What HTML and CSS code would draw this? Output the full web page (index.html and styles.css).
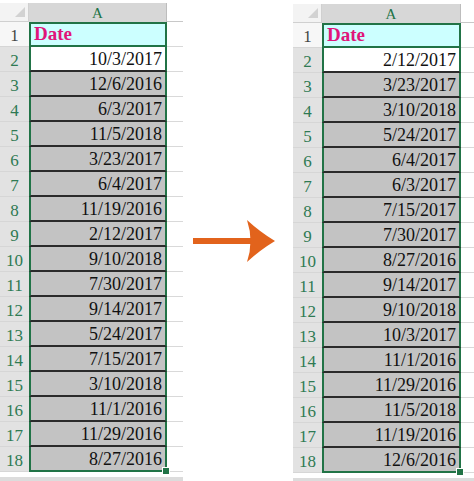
FILE: index.html
```html
<!DOCTYPE html>
<html>
<head>
<meta charset="utf-8">
<link rel="stylesheet" href="styles.css">
</head>
<body>
<div class="page">
  <div class="sheet sheet-left">
    <div class="grid grid-left">
      <div class="corner"><span class="tri"></span></div>
      <div class="colhead">A</div>
      <div class="xhead"></div>

      <div class="rh">1</div><div class="ca a1">Date</div><div class="cx"></div>
      <div class="rh sel">2</div><div class="ca">10/3/2017</div><div class="cx"></div>
      <div class="rh sel">3</div><div class="ca g">12/6/2016</div><div class="cx"></div>
      <div class="rh sel">4</div><div class="ca g">6/3/2017</div><div class="cx"></div>
      <div class="rh sel">5</div><div class="ca g">11/5/2018</div><div class="cx"></div>
      <div class="rh sel">6</div><div class="ca g">3/23/2017</div><div class="cx"></div>
      <div class="rh sel">7</div><div class="ca g">6/4/2017</div><div class="cx"></div>
      <div class="rh sel">8</div><div class="ca g">11/19/2016</div><div class="cx"></div>
      <div class="rh sel">9</div><div class="ca g">2/12/2017</div><div class="cx"></div>
      <div class="rh sel">10</div><div class="ca g">9/10/2018</div><div class="cx"></div>
      <div class="rh sel">11</div><div class="ca g">7/30/2017</div><div class="cx"></div>
      <div class="rh sel">12</div><div class="ca g">9/14/2017</div><div class="cx"></div>
      <div class="rh sel">13</div><div class="ca g">5/24/2017</div><div class="cx"></div>
      <div class="rh sel">14</div><div class="ca g">7/15/2017</div><div class="cx"></div>
      <div class="rh sel">15</div><div class="ca g">3/10/2018</div><div class="cx"></div>
      <div class="rh sel">16</div><div class="ca g">11/1/2016</div><div class="cx"></div>
      <div class="rh sel">17</div><div class="ca g">11/29/2016</div><div class="cx"></div>
      <div class="rh sel">18</div><div class="ca g last">8/27/2016</div><div class="cx"></div>
    </div>
    <div class="strip"></div>
  </div>

  <div class="middle">
    <svg class="arrow" width="110" height="50" viewBox="0 0 110 50">
      <rect x="10" y="22" width="60" height="6" fill="#e2631c"/>
      <path d="M64 4 Q77 16 92 25 Q77 34 64 46 Q71 25 64 4 Z" fill="#e2631c"/>
    </svg>
  </div>

  <div class="sheet sheet-right">
    <div class="grid grid-right">
      <div class="corner"><span class="tri"></span></div>
      <div class="colhead">A</div>
      <div class="xhead"></div>

      <div class="rh">1</div><div class="ca a1">Date</div><div class="cx"></div>
      <div class="rh sel">2</div><div class="ca">2/12/2017</div><div class="cx"></div>
      <div class="rh sel">3</div><div class="ca g">3/23/2017</div><div class="cx"></div>
      <div class="rh sel">4</div><div class="ca g">3/10/2018</div><div class="cx"></div>
      <div class="rh sel">5</div><div class="ca g">5/24/2017</div><div class="cx"></div>
      <div class="rh sel">6</div><div class="ca g">6/4/2017</div><div class="cx"></div>
      <div class="rh sel">7</div><div class="ca g">6/3/2017</div><div class="cx"></div>
      <div class="rh sel">8</div><div class="ca g">7/15/2017</div><div class="cx"></div>
      <div class="rh sel">9</div><div class="ca g">7/30/2017</div><div class="cx"></div>
      <div class="rh sel">10</div><div class="ca g">8/27/2016</div><div class="cx"></div>
      <div class="rh sel">11</div><div class="ca g">9/14/2017</div><div class="cx"></div>
      <div class="rh sel">12</div><div class="ca g">9/10/2018</div><div class="cx"></div>
      <div class="rh sel">13</div><div class="ca g">10/3/2017</div><div class="cx"></div>
      <div class="rh sel">14</div><div class="ca g">11/1/2016</div><div class="cx"></div>
      <div class="rh sel">15</div><div class="ca g">11/29/2016</div><div class="cx"></div>
      <div class="rh sel">16</div><div class="ca g">11/5/2018</div><div class="cx"></div>
      <div class="rh sel">17</div><div class="ca g">11/19/2016</div><div class="cx"></div>
      <div class="rh sel">18</div><div class="ca g last">12/6/2016</div><div class="cx"></div>
    </div>
    <div class="strip"></div>
  </div>
</div>
</body>
</html>
```

FILE: styles.css
```css
html, body {
  margin: 0;
  padding: 0;
  background: #ffffff;
}

body {
  font-family: "Liberation Serif", "DejaVu Serif", "Times New Roman", serif;
  width: 474px;
  height: 481px;
  overflow: hidden;
}

.page {
  display: flex;
  align-items: stretch;
  height: 481px;
}

.sheet {
  display: flex;
  flex-direction: column;
  padding-top: 3px;
}

.sheet-right {
  padding-top: 4px;
}

.grid {
  display: grid;
  grid-template-rows: 19px repeat(18, 25px);
}

.grid-left {
  grid-template-columns: 29px 138px 16px;
}

.grid-right {
  grid-template-columns: 29px 139px 13px;
}

.middle {
  width: 110px;
  display: flex;
  align-items: center;
  justify-content: center;
}

.arrow {
  display: block;
}

.corner {
  background: #f3f3f3;
  border-bottom: 1px solid #d0d0d0;
  border-right: 1px solid #d0d0d0;
  box-sizing: border-box;
  display: flex;
  align-items: flex-end;
  justify-content: flex-end;
  padding: 0 3px 4px 0;
}

.tri {
  width: 0;
  height: 0;
  border-left: 10px solid transparent;
  border-bottom: 10px solid #d2d2d2;
}

.colhead {
  background: #d7d7d7;
  color: #217346;
  font-family: "Liberation Serif", serif;
  font-size: 15px;
  line-height: 1;
  display: flex;
  align-items: center;
  justify-content: center;
  box-sizing: border-box;
  border-right: 1px solid #bdbdbd;
  padding-top: 1px;
}

.xhead {
  border-bottom: 1px solid #c8c8c8;
  box-sizing: border-box;
}

.rh {
  box-sizing: border-box;
  background: #f7f7f7;
  border-bottom: 1px solid #d6d6d6;
  color: #444444;
  font-family: "Liberation Serif", serif;
  font-size: 17px;
  line-height: 1;
  display: flex;
  align-items: center;
  justify-content: center;
  padding-top: 3px;
}

.rh.sel {
  background: #e2e2e2;
  color: #2f7a53;
}

.ca {
  box-sizing: border-box;
  border-left: 2px solid #217346;
  border-right: 2px solid #217346;
  border-bottom: 2px solid #2b2b2b;
  font-family: "Liberation Serif", serif;
  font-size: 18px;
  line-height: 1;
  color: #111111;
  display: flex;
  align-items: flex-end;
  justify-content: flex-end;
  padding: 0 3px 2px 0;
  background: #ffffff;
}

.ca.g {
  background: #c3c3c3;
}

.ca.a1 {
  background: #ccffff;
  border-top: 2px solid #217346;
  border-bottom: 2px solid #217346;
  justify-content: flex-start;
  padding: 0 0 2px 3px;
  color: #e0157a;
  font-weight: bold;
  font-size: 19px;
}

.ca.last {
  border-bottom: 2px solid #217346;
  position: relative;
}

.ca.last::after {
  content: "";
  position: absolute;
  right: -5px;
  bottom: -5px;
  width: 6px;
  height: 6px;
  background: #217346;
  border: 1px solid #ffffff;
}

.cx {
  box-sizing: border-box;
  border-bottom: 1px solid #d9d9d9;
}

.strip {
  margin-top: 5px;
  height: 4px;
  background: #dcdcdc;
}
```
